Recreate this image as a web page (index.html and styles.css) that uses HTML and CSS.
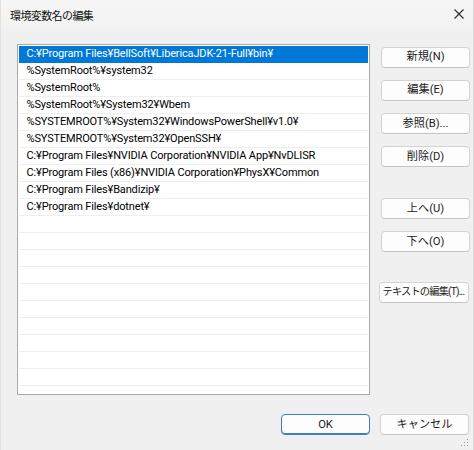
FILE: index.html
```html
<!DOCTYPE html>
<html lang="ja">
<head>
<meta charset="utf-8">
<title>環境変数名の編集</title>
<link rel="stylesheet" href="styles.css">
</head>
<body>
<div class="window">
  <div class="titlebar">
    <span class="title">環境変数名の編集</span>
    <span class="close">
      <svg width="10" height="10" viewBox="0 0 10 10"><path d="M0.5 0.5 L9.5 9.5 M9.5 0.5 L0.5 9.5" stroke="#2b2b2b" stroke-width="1.1" fill="none"/></svg>
    </span>
  </div>
  <div class="content">
    <div class="main">
      <div class="list">
        <div class="row selected">C:¥Program Files¥BellSoft¥LibericaJDK-21-Full¥bin¥</div>
        <div class="row">%SystemRoot%¥system32</div>
        <div class="row">%SystemRoot%</div>
        <div class="row">%SystemRoot%¥System32¥Wbem</div>
        <div class="row">%SYSTEMROOT%¥System32¥WindowsPowerShell¥v1.0¥</div>
        <div class="row">%SYSTEMROOT%¥System32¥OpenSSH¥</div>
        <div class="row">C:¥Program Files¥NVIDIA Corporation¥NVIDIA App¥NvDLISR</div>
        <div class="row">C:¥Program Files (x86)¥NVIDIA Corporation¥PhysX¥Common</div>
        <div class="row">C:¥Program Files¥Bandizip¥</div>
        <div class="row">C:¥Program Files¥dotnet¥</div>
        <div class="row"></div>
        <div class="row"></div>
        <div class="row"></div>
        <div class="row"></div>
        <div class="row"></div>
        <div class="row"></div>
        <div class="row"></div>
        <div class="row"></div>
        <div class="row"></div>
        <div class="row"></div>
        <div class="row last"></div>
      </div>
      <div class="side">
        <button class="btn">新規(N)</button>
        <button class="btn">編集(E)</button>
        <button class="btn">参照(B)...</button>
        <button class="btn">削除(D)</button>
        <button class="btn group2">上へ(U)</button>
        <button class="btn">下へ(O)</button>
        <button class="btn group3 wide">テキストの編集(T)...</button>
      </div>
    </div>
    <div class="footer">
      <button class="btn default">OK</button>
      <button class="btn">キャンセル</button>
    </div>
  </div>
  <svg class="grip" width="8" height="8" viewBox="0 0 8 8">
    <rect x="6" y="0" width="1" height="1" fill="#9a9a9a"/>
    <rect x="3" y="3" width="1" height="1" fill="#9a9a9a"/>
    <rect x="6" y="3" width="1" height="1" fill="#9a9a9a"/>
    <rect x="0" y="6" width="1" height="1" fill="#9a9a9a"/>
    <rect x="3" y="6" width="1" height="1" fill="#9a9a9a"/>
    <rect x="6" y="6" width="1" height="1" fill="#9a9a9a"/>
  </svg>
</div>
</body>
</html>
```
FILE: styles.css
```css
html, body {
  margin: 0;
  padding: 0;
}
body {
  width: 474px;
  height: 450px;
  overflow: hidden;
  background: #f0f0f0;
  font-family: "Roboto", "Noto Sans CJK JP", sans-serif;
  font-size: 11px;
  color: #000;
}
.window {
  position: relative;
  width: 474px;
  height: 450px;
  background: #f0f0f0;
  box-sizing: border-box;
  border-left: 1px solid #e2e2e2;
  border-right: 1px solid #d8d8d8;
}
.titlebar {
  height: 30px;
  display: flex;
  align-items: center;
  justify-content: space-between;
  padding: 0 9px 0 9px;
  background: linear-gradient(#f6f6f6, #f2f2f2);
}
.title {
  font-family: "Noto Sans CJK JP", sans-serif;
  font-size: 11px;
  letter-spacing: -0.6px;
  color: #111;
  margin-top: -1px;
}
.close {
  display: flex;
  width: 10px;
  height: 10px;
  margin-top: -2px;
}
.content {
  padding: 14px 0 0 16px;
}
.main {
  display: flex;
  align-items: flex-start;
}
.list {
  width: 353px;
  height: 351px;
  box-sizing: border-box;
  border: 1px solid #a8a8a8;
  background: #fff;
  padding: 1px;
  overflow: hidden;
}
.row {
  height: 17px;
  box-sizing: border-box;
  border-bottom: 1px solid #efefef;
  padding-left: 7.5px;
  line-height: 16px;
  letter-spacing: -0.15px;
  white-space: nowrap;
  overflow: hidden;
}
.row.selected {
  background: #0078d7;
  color: #fff;
  border-bottom-color: #0078d7;
}
.side {
  display: flex;
  flex-direction: column;
  margin-left: 11px;
  padding-top: 2.5px;
  gap: 12.3px;
}
.btn {
  width: 89px;
  height: 21px;
  box-sizing: border-box;
  background: #fdfdfd;
  border: 1px solid #d3d3d3;
  border-bottom-color: #c4c4c4;
  border-radius: 4px;
  font-family: "Roboto", "Noto Sans CJK JP", sans-serif;
  font-size: 11.2px;
  color: #1b1b1b;
  padding: 0;
  line-height: 18px;
  text-align: center;
  white-space: nowrap;
}
.btn.group2 {
  margin-top: 18.5px;
}
.btn.group3 {
  margin-top: 17px;
}
.btn.wide {
  width: 90px;
  margin-left: -2.5px;
  font-size: 10.2px;
  letter-spacing: -0.8px;
}
.footer {
  display: flex;
  justify-content: flex-end;
  gap: 10px;
  padding: 19px 4px 0 0;
}
.btn.default {
  border: 1px solid #3d7fbe;
  box-shadow: inset 0 -1px 0 #3d7fbe;
}
.grip {
  position: absolute;
  right: 4px;
  bottom: 3px;
}
```
